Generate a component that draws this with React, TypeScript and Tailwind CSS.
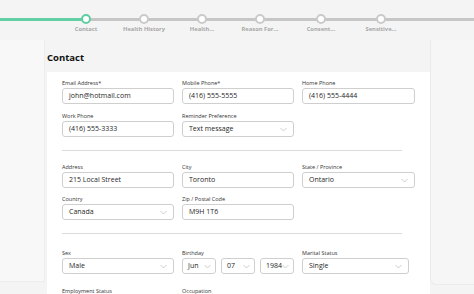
import React from 'react';

const steps = [
  { label: 'Contact', w: 'w-[58px]', active: true },
  { label: 'Health History', w: 'w-[58px]', active: false },
  { label: 'Health...', w: 'w-[58px]', active: false },
  { label: 'Reason For...', w: 'w-[58px]', active: false },
  { label: 'Consent...', w: 'w-[64px]', active: false },
  { label: 'Sensitive...', w: 'w-[56px]', active: false },
];

const Chevron = () => (
  <svg width="7" height="5" viewBox="0 0 7 5" className="shrink-0">
    <polyline points="0.5,1 3.5,4 6.5,1" fill="none" stroke="#c2c2c2" strokeWidth="0.8" />
  </svg>
);

const Field = ({ label, value, select }: { label?: string; value: string; select?: boolean }) => (
  <div className="flex flex-col w-full">
    {label !== undefined && <span className="text-[5.5px] leading-[8px] text-[#333] mb-[1px] whitespace-nowrap">{label}</span>}
    <div className="h-[16px] border border-[#cfcfcf] rounded-[3px] bg-white pl-[6px] pr-[6px] flex items-center justify-between">
      <span className="text-[7px] text-[#1f1f1f] font-medium">{value}</span>
      {select && <Chevron />}
    </div>
  </div>
);

const SmallSelect = ({ value }: { value: string }) => (
  <div className="w-[34px] h-[16px] border border-[#cfcfcf] rounded-[3px] bg-white pl-[5px] pr-[4px] flex items-center justify-between">
    <span className="text-[7px] text-[#1f1f1f] font-medium">{value}</span>
    <Chevron />
  </div>
);

const Divider = ({ mt, mb }: { mt: string; mb: string }) => (
  <div className={`${mt} ${mb} w-[340px] h-px bg-[#dcdcdc]`} />
);

export default function App() {
  return (
    <div className="h-[294px] overflow-hidden bg-[#f4f4f4] font-['Open_Sans',sans-serif]">
      <div className="relative h-[40px]">
        <div className="absolute left-0 right-0 top-[18px] flex h-[3px]">
          <div className="w-[86px] bg-[#62cea3]" />
          <div className="flex-1 bg-[#c6c6c6]" />
        </div>
        <div className="relative flex pl-[57px] pt-[14px]">
          {steps.map((s) => (
            <div key={s.label} className={`${s.w} flex flex-col items-center`}>
              <div
                className={`w-[10px] h-[10px] rounded-full bg-white border-2 ${s.active ? 'border-[#5fcda0]' : 'border-[#cacaca]'}`}
              />
              <span className="mt-[1px] text-[5.8px] leading-[8px] font-bold text-[#a8a8a8] whitespace-nowrap">{s.label}</span>
            </div>
          ))}
        </div>
      </div>

      <div className="flex">
        <div className="w-[45px] h-[242px] shrink-0 bg-[#f8f8f8] border-r border-b border-[#ededed]" />
        <div className="w-[385px] shrink-0">
          <h1 className="mt-[11px] ml-[2px] text-[9.5px] leading-[14px] font-bold text-[#111]">Contact</h1>
          <div className="mt-[7px] ml-[2px] w-[383px] h-[260px] bg-white pl-[15px] pt-[7px]">
            <div className="grid grid-cols-[112px_112px_113px] gap-x-[8px] gap-y-[8px]">
              <Field label="Email Address*" value="john@hotmail.com" />
              <Field label="Mobile Phone*" value="(416) 555-5555" />
              <Field label="Home Phone" value="(416) 555-4444" />
              <Field label="Work Phone" value="(416) 555-3333" />
              <Field label="Reminder Preference" value="Text message" select />
            </div>
            <Divider mt="mt-[13px]" mb="mb-[12px]" />
            <div className="grid grid-cols-[112px_112px_113px] gap-x-[8px] gap-y-[7px]">
              <Field label="Address" value="215 Local Street" />
              <Field label="City" value="Toronto" />
              <Field label="State / Province" value="Ontario" select />
              <Field label="Country" value="Canada" select />
              <Field label="Zip / Postal Code" value="M9H 1T6" />
            </div>
            <Divider mt="mt-[13px]" mb="mb-[15px]" />
            <div className="grid grid-cols-[112px_112px_107px] gap-x-[8px]">
              <Field label="Sex" value="Male" select />
              <div className="flex flex-col">
                <span className="text-[5.5px] leading-[8px] text-[#333] mb-[1px]">Birthday</span>
                <div className="flex gap-[5px]">
                  <SmallSelect value="Jun" />
                  <SmallSelect value="07" />
                  <SmallSelect value="1984" />
                </div>
              </div>
              <Field label="Marital Status" value="Single" select />
            </div>
            <div className="mt-[13px] grid grid-cols-[112px_112px_113px] gap-x-[8px]">
              <span className="text-[5.5px] leading-[8px] text-[#333]">Employment Status</span>
              <span className="text-[5.5px] leading-[8px] text-[#333]">Occupation</span>
            </div>
          </div>
        </div>
        <div className="w-[44px] h-[245px] shrink-0 bg-[#f6f6f6] border-l border-b border-[#ebebeb] rounded-bl-[6px]" />
      </div>
    </div>
  );
}
